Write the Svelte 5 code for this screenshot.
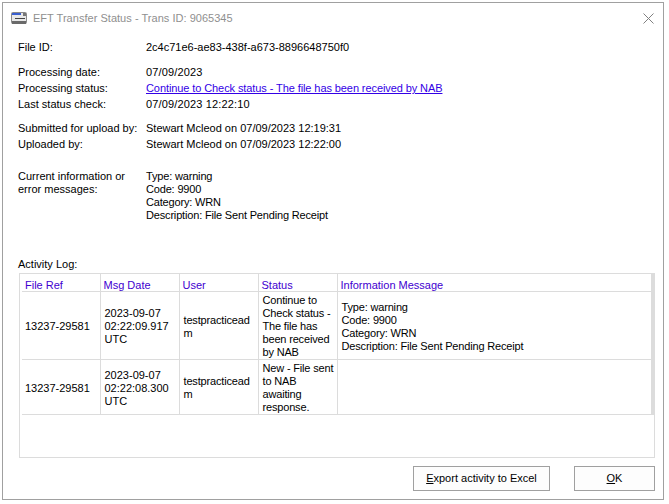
<script>
  const log = [
    {
      ref: "13237-29581",
      date: "2023-09-07 02:22:09.917 UTC",
      user: "testpracticeadm",
      status: "Continue to Check status - The file has been received by NAB",
      info: ["Type: warning", "Code: 9900", "Category: WRN", "Description: File Sent Pending Receipt"]
    },
    {
      ref: "13237-29581",
      date: "2023-09-07 02:22:08.300 UTC",
      user: "testpracticeadm",
      status: "New - File sent to NAB awaiting response.",
      info: []
    }
  ];
</script>

<div class="window">
  <header class="titlebar">
    <svg class="app-icon" width="16" height="13" viewBox="0 0 16 13">
      <rect x="0.5" y="0.5" width="15" height="11" rx="1" fill="#e8e8e8" stroke="#8a8a8a" />
      <rect x="1" y="1" width="9" height="2" fill="#3a5fd0" />
      <rect x="12" y="1" width="3" height="3" fill="#777" />
      <rect x="4" y="6" width="10" height="1" fill="#444" />
      <rect x="1" y="9" width="14" height="3" fill="#6a6a6a" />
    </svg>
    <span class="title">EFT Transfer Status - Trans ID: 9065345</span>
    <svg class="close" width="11" height="11" viewBox="0 0 11 11">
      <path d="M0.5 0.5 L10.5 10.5 M10.5 0.5 L0.5 10.5" stroke="#808080" fill="none" />
    </svg>
  </header>

  <div class="content">
    <dl class="fields first">
      <dt>File ID:</dt>
      <dd class="plain">2c4c71e6-ae83-438f-a673-8896648750f0</dd>
    </dl>
    <dl class="fields">
      <dt>Processing date:</dt>
      <dd class="num">07/09/2023</dd>
      <dt>Processing status:</dt>
      <dd><a href="#status">Continue to Check status - The file has been received by NAB</a></dd>
      <dt>Last status check:</dt>
      <dd class="num">07/09/2023 12:22:10</dd>
    </dl>
    <dl class="fields uploads">
      <dt>Submitted for upload by:</dt>
      <dd class="plain">Stewart Mcleod on 07/09/2023 12:19:31</dd>
      <dt>Uploaded by:</dt>
      <dd class="plain">Stewart Mcleod on 07/09/2023 12:22:00</dd>
    </dl>
    <dl class="fields messages">
      <dt>Current information or<br />error messages:</dt>
      <dd>Type: warning<br />Code: 9900<br />Category: WRN<br />Description: File Sent Pending Receipt</dd>
    </dl>

    <div class="log-label">Activity Log:</div>
    <div class="log">
      <table>
        <colgroup>
          <col style="width:78px" />
          <col style="width:79px" />
          <col style="width:79px" />
          <col style="width:79px" />
          <col />
        </colgroup>
        <thead>
          <tr>
            <th>File Ref</th>
            <th>Msg Date</th>
            <th>User</th>
            <th>Status</th>
            <th>Information Message</th>
          </tr>
        </thead>
        <tbody>
          {#each log as row}
            <tr>
              <td class="plain">{row.ref}</td>
              <td class="plain">{row.date}</td>
              <td class="user">{row.user}</td>
              <td>{row.status}</td>
              <td>
                {#each row.info as line}
                  <div>{line}</div>
                {/each}
              </td>
            </tr>
          {/each}
        </tbody>
      </table>
    </div>

    <div class="actions">
      <button class="export"><u>E</u>xport activity to Excel</button>
      <button class="ok"><u>O</u>K</button>
    </div>
  </div>
</div>

<style>
  :global(body) {
    background: #fff;
  }

  .window {
    box-sizing: border-box;
    width: 662px;
    height: 498px;
    margin: 2px 0 0 2px;
    border: 1px solid #a0a0a0;
    background: #fff;
    font-family: "Liberation Sans", Arial, sans-serif;
    font-size: 11px;
    line-height: 13px;
    letter-spacing: -0.17px;
    color: #000;
    display: flex;
    flex-direction: column;
  }

  .titlebar {
    display: flex;
    align-items: center;
    height: 30px;
    padding: 0 9px 0 8px;
    flex: none;
  }

  .app-icon {
    margin-right: 6px;
  }

  .title {
    flex: 1;
    color: #8f8f8f;
    font-size: 11px;
    letter-spacing: 0.03px;
  }

  .content {
    flex: 1;
    display: flex;
    flex-direction: column;
    padding: 8px 8px 7px 15px;
  }

  .fields {
    display: grid;
    grid-template-columns: 128px 1fr;
    row-gap: 3px;
    margin: 12px 0 0;
  }

  .fields.first {
    margin-top: 0;
  }

  .fields.uploads {
    margin-top: 11px;
  }

  .fields dt {
    letter-spacing: 0;
  }

  .fields dd {
    margin: 0;
  }

  .plain {
    letter-spacing: 0;
  }

  .num {
    letter-spacing: 0.15px;
  }

  .fields a {
    color: #3300e6;
    text-decoration: underline;
    letter-spacing: -0.09px;
  }

  .fields.messages {
    margin-top: 19px;
  }

  .log-label {
    margin-top: 36px;
    height: 15px;
    letter-spacing: 0;
  }

  .log {
    box-sizing: border-box;
    height: 185px;
    border: 1px solid #dcdcdc;
    padding: 0 0 0 2px;
    flex: none;
    margin-left: 1px;
  }

  table {
    width: 100%;
    border-collapse: collapse;
    table-layout: fixed;
    border-right: 3px solid #dcdcdc;
  }

  th {
    font-weight: normal;
    text-align: left;
    color: #3f00d0;
    height: 12px;
    line-height: 12px;
    padding: 5px 2px 0 3px;
    border-bottom: 1px solid #dcdcdc;
    border-left: 1px solid #dcdcdc;
    letter-spacing: 0;
  }

  td {
    padding: 2px 0 0 4px;
    border-bottom: 1px solid #dcdcdc;
    border-left: 1px solid #dcdcdc;
    vertical-align: middle;
  }

  th:first-child,
  td:first-child {
    border-left: 0;
    padding-left: 3px;
  }

  .user {
    overflow-wrap: anywhere;
  }

  .actions {
    display: flex;
    justify-content: flex-end;
    gap: 24px;
    margin-top: 8px;
  }

  button {
    box-sizing: border-box;
    height: 25px;
    border: 1px solid #a0a0a0;
    background: #fdfdfd;
    font: inherit;
    letter-spacing: 0;
    color: #000;
    padding: 0;
  }

  .export {
    width: 137px;
  }

  .ok {
    width: 81px;
  }
</style>
